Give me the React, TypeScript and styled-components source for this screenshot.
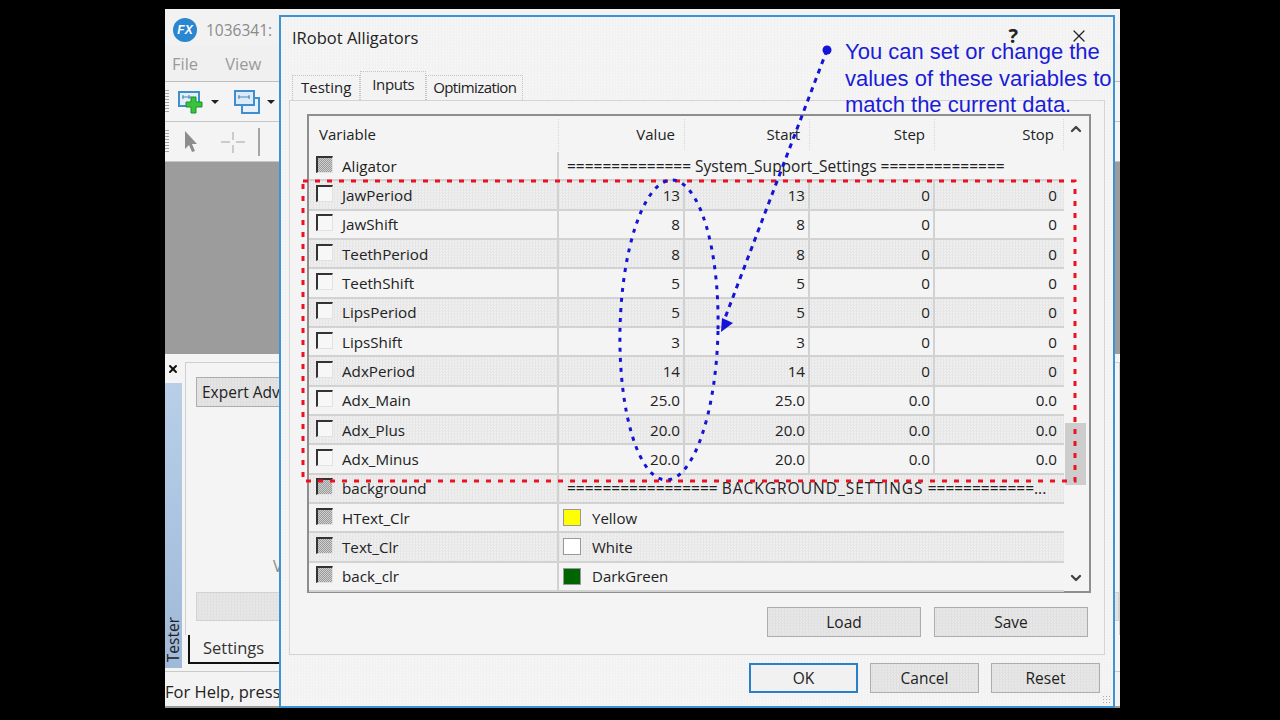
import { createGlobalStyle, styled } from "styled-components"
import { ChevronDown, ChevronUp, X } from "lucide-react"

const Global = createGlobalStyle`
  html, body { margin: 0; padding: 0; background: #000; }
  body { font-family: "Open Sans", "Liberation Sans", sans-serif; color: #222; }
`
const dither = (a: string, b: string, s = 3) => `repeating-conic-gradient(${a} 0 25%, ${b} 0 50%) 0 0 / ${s}px ${s}px`

const Stage = styled.div`
  width: 1280px; height: 720px; background: #000; position: relative; overflow: hidden;
  display: flex; align-items: flex-start; padding: 9px 0 0 165px; box-sizing: border-box;
`
const AppWindow = styled.div`
  width: 955px; height: 699px; background: #f2f2f2; display: flex; flex-direction: column; position: relative;
`
const AppTitle = styled.div`
  height: 36px; display: flex; align-items: center; gap: 9px; padding: 6px 0 0 8px; box-sizing: border-box;
  font-size: 15.5px; color: #8b8b8b;
`
const Logo = styled.div`
  width: 24px; height: 24px; border-radius: 50%; background: #2a86cf; color: #fff;
  display: flex; align-items: center; justify-content: center;
  font: italic bold 12px "Liberation Sans", sans-serif;
`
const MenuBar = styled.div`
  height: 37px; display: flex; align-items: center; gap: 27px; padding-left: 7px;
  font-size: 16.5px; color: #9a9a9a; background: #f0f0f0; border-bottom: 1px solid #bdbdbd; box-sizing: border-box;
`
const Toolbar = styled.div<{ $h: number }>`
  height: ${p => p.$h}px; display: flex; align-items: center; padding-left: 9px; gap: 6px; box-sizing: border-box;
  border-bottom: 1px solid #c6c6c6; background: #f4f4f4;
  &::before { content: ""; width: 4px; height: 24px; margin-left: -9px; margin-right: 3px; background: repeating-linear-gradient(#a5a5a5 0 1px, transparent 1px 3px); }
`
const Caret = styled.span`
  width: 0; height: 0; border-left: 4px solid transparent; border-right: 4px solid transparent;
  border-top: 4px solid #222; margin-right: 9px;
`
const GreyArea = styled.div`
  height: 192px; background: #9c9c9c;
`
const TesterPanel = styled.div`
  flex: 1; display: flex; background: #f4f4f4; min-height: 0;
`
const TesterSide = styled.div`
  width: 20px; display: flex; flex-direction: column; background: #f4f4f4;
`
const PanelClose = styled.div`
  height: 29px; width: 15px; display: flex; align-items: center; justify-content: center; color: #111;
`
const TesterStrip = styled.div`
  flex: 1; width: 17px; background: linear-gradient(#b9cfe8, #9fb9d8); display: flex; align-items: flex-end; justify-content: center;
  padding-bottom: 6px; margin-bottom: 3px;
`
const TesterLabel = styled.span`
  writing-mode: vertical-rl; transform: rotate(180deg); font-size: 15.5px; color: #222; line-height: 17px;
`
const TesterBody = styled.div`
  flex: 1; display: flex; flex-direction: column; padding: 8px 0 7px 0; min-width: 0;
`
const TesterContent = styled.div`
  flex: 1; border: 1px solid #cfcfcf; border-bottom: none; padding: 14px 0 0 10px; display: flex; flex-direction: column;
`
const ComboBox = styled.div`
  height: 30px; width: 83px; background: ${dither("#dedede", "#e6e6e6")}; border: 1px solid #adadad; border-right: none; display: flex; align-items: center;
  padding-left: 5px; font-size: 15.5px; white-space: nowrap; box-sizing: border-box; overflow: hidden;
`
const VisualLabel = styled.div`
  margin: auto 0 0 77px; font-size: 15.5px; color: #888; white-space: nowrap; line-height: 20px;
`
const GreyBar = styled.div`
  height: 29px; background: ${dither("#e0e0e0", "#e8e8e8")}; border: 1px solid #d2d2d2; margin-top: 16px; margin-bottom: 14px; box-sizing: border-box;
`
const SettingsTab = styled.div`
  height: 29px; width: 91px; margin-left: 3px; border-left: 2px solid #111; border-bottom: 2px solid #111; box-sizing: border-box;
  font-size: 16.5px; padding: 1px 0 0 13px; color: #333;
`
const StatusBar = styled.div`
  height: 37px; border-top: 1px solid #c9c9c9; display: flex; align-items: center; box-sizing: border-box;
  padding: 4px 0 0 0; font-size: 16.5px; color: #222; background: #f3f3f3; white-space: nowrap; border-bottom: 2px solid #9a9a9a;
`

const Dialog = styled.div`
  position: absolute; left: 114px; top: 6px; width: 836px; height: 693px; box-sizing: border-box;
  background: ${dither("#f1f1f1", "#f6f6f6")}; border: 2px solid #3f92d2; display: flex; flex-direction: column;
`
const DialogTitle = styled.div`
  height: 55px; padding: 9px 0 0 11px; box-sizing: border-box; font-size: 16.5px; color: #222; flex: none;
  display: flex; justify-content: space-between;
`
const TitleButtons = styled.div`
  display: flex; gap: 51px; padding: 0 24px 0 0; align-items: flex-start; color: #222;
`
const HelpMark = styled.span`
  font: bold 20px/22px "Open Sans", sans-serif; margin-top: -1px;
`
const TabRow = styled.div`
  display: flex; align-items: flex-end; height: 28px; padding-left: 11px; flex: none;
`
const Tab = styled.div<{ $active?: boolean; $pad: number; $track?: number }>`
  height: ${p => (p.$active ? 29 : 25)}px; padding: 0 ${p => p.$pad}px ${p => (p.$active ? 4 : 2)}px; display: flex; align-items: center;
  border: 1px dotted #c4c4c4; border-bottom: none; box-sizing: border-box; font-size: 15px;
  letter-spacing: ${p => p.$track ?? 0}px;
  background: #f3f3f3; color: #222; white-space: nowrap;
`
const TabPanel = styled.div`
  height: 555px; margin: 0 8px; border: 1px solid #d4d4d4; box-sizing: border-box; padding: 13px 13px 0 17px; flex: none;
  background: #f4f4f4;
`
const TableFrame = styled.div`
  height: 479px; width: 784px; border: 2px solid #8e8e8e; box-sizing: border-box; background: #f4f4f4;
  display: flex;
`
const TableBody = styled.div`
  width: 755px; display: flex; flex-direction: column;
`
const Columns = `display: grid; grid-template-columns: 250px 126px 125px 125px 129px;`
const HeaderRow = styled.div`
  ${Columns}; height: 36px; font-size: 15px; flex: none;
`
const HeaderCell = styled.div<{ $left?: boolean }>`
  display: flex; align-items: center; justify-content: ${p => (p.$left ? "flex-start" : "flex-end")};
  padding: ${p => (p.$left ? "0 0 2px 10px" : "0 9px 2px 0")}; border-right: 1px dotted #d8d8d8; margin: 3px 0 2px;
`
const Row = styled.div<{ $shade?: boolean }>`
  ${Columns}; height: 29.33px; flex: none; box-sizing: border-box; border-bottom: 2px solid #d2d2d2;
  background: ${p => (p.$shade ? dither("#e6e6e6", "#f0f0f0") : "#f4f4f4")}; font-size: 15.2px;
`
const NameCell = styled.div`
  display: flex; align-items: center; padding-left: 7px; gap: 9px; border-right: 2px solid #d2d2d2; white-space: nowrap;
`
const CheckBox = styled.span<{ $locked?: boolean }>`
  width: 17px; height: 17px; box-sizing: border-box; flex: none; margin-top: -3px;
  border-left: 2px solid #333; border-top: 2px solid #333;
  border-right: 1px solid #e2e2e2; border-bottom: 1px solid #e2e2e2;
  background: ${p => (p.$locked ? dither("#9a9a9a", "#cfcfcf", 2) : "#f7f7f7")};
`
const NumCell = styled.div`
  display: flex; align-items: center; justify-content: flex-end; padding-right: 3px; border-right: 2px solid #d2d2d2;
`
const LastCell = styled(NumCell)`
  border-right: none; padding-right: 7px;
`
const WideCell = styled.div`
  grid-column: 2 / -1; display: flex; align-items: center; padding-left: 8px; white-space: pre; overflow: hidden; gap: 11px; font-size: 15.5px;
`
const Caps = styled.span`
  letter-spacing: 1px;
`
const Swatch = styled.span<{ $color: string }>`
  width: 18px; height: 17px; flex: none; box-sizing: border-box; border: 1px solid #999; margin-left: -4px; background: ${p => p.$color};
`
const ColorName = styled.span`
  font-size: 15px;
`
const ScrollBar = styled.div`
  flex: 1; display: flex; flex-direction: column; align-items: center; padding: 5px 2px 0 0; color: #444;
`
const ScrollThumb = styled.div`
  width: 21px; height: 62px; background: #cdcdcd; margin-top: 286px;
`
const ScrollEnd = styled.div`
  margin-top: auto; padding-bottom: 5px; display: flex;
`
const TableActions = styled.div`
  display: flex; justify-content: flex-end; gap: 13px; padding: 14px 3px 0 0;
`
const Button = styled.button<{ $w: number; $primary?: boolean }>`
  width: ${p => p.$w}px; height: 30px; font: 15.5px "Open Sans", "Liberation Sans", sans-serif; color: #222; padding: 0;
  background: ${p => (p.$primary ? "#f1f1f1" : dither("#e0e0e0", "#e8e8e8"))};
  border: ${p => (p.$primary ? "2px solid #2a7fc9" : "1px solid #adadad")};
`
const DialogActions = styled.div`
  display: flex; justify-content: flex-end; gap: 12px; padding: 8px 13px 0 0;
`
const Grip = styled.div`
  position: absolute; right: 2px; bottom: 2px; width: 9px; height: 9px;
  background-image: radial-gradient(#aaa 1px, transparent 1px); background-size: 3px 3px;
`
const Note = styled.div`
  position: absolute; left: 845px; top: 39px; font: 22px/26.6px "Liberation Sans", sans-serif; color: #1c1cd6; white-space: nowrap;
`
const Overlay = styled.svg`
  position: absolute; left: 0; top: 0; pointer-events: none;
`

type Item = { name: string; value: string; step: string }
const items: Item[] = [
  { name: "JawPeriod", value: "13", step: "0" },
  { name: "JawShift", value: "8", step: "0" },
  { name: "TeethPeriod", value: "8", step: "0" },
  { name: "TeethShift", value: "5", step: "0" },
  { name: "LipsPeriod", value: "5", step: "0" },
  { name: "LipsShift", value: "3", step: "0" },
  { name: "AdxPeriod", value: "14", step: "0" },
  { name: "Adx_Main", value: "25.0", step: "0.0" },
  { name: "Adx_Plus", value: "20.0", step: "0.0" },
  { name: "Adx_Minus", value: "20.0", step: "0.0" },
]
const colors = [
  { name: "HText_Clr", color: "#ffff00", label: "Yellow", shade: false },
  { name: "Text_Clr", color: "#ffffff", label: "White", shade: true },
  { name: "back_clr", color: "#006400", label: "DarkGreen", shade: false },
]

function AddIcon() {
  return (
    <svg width="27" height="24" viewBox="0 0 27 24">
      <rect x="1" y="2" width="20" height="14" fill="#e4eff8" stroke="#3f8fce" strokeWidth="2" />
      <path d="M4 7h9M5 5v4M11 5v4" stroke="#4a86b5" strokeWidth="1" />
      <path d="M13 7h5v5h6v5h-6v6h-5v-6H8v-5h5z" fill="#35c43c" stroke="#1f8f2a" />
    </svg>
  )
}
function CopyIcon() {
  return (
    <svg width="27" height="26" viewBox="0 0 27 26">
      <rect x="8" y="9" width="17" height="15" fill="#e8f1f9" stroke="#3f8fce" strokeWidth="2" />
      <rect x="1" y="2" width="19" height="14" fill="#dcebf7" stroke="#3f8fce" strokeWidth="2" />
      <path d="M4 8h12M5 6v4M15 6v4" stroke="#4a86b5" strokeWidth="1" />
    </svg>
  )
}
function ToolIcons() {
  return (
    <svg width="90" height="30" viewBox="0 0 90 30">
      <path d="M7 4v18l4-4 3 7 3-1-3-7h5z" fill="#8d8d8d" />
      <path d="M55 5v8M55 18v8M43 15h9M58 15h9" stroke="#bdbdbd" strokeWidth="1.5" />
      <path d="M81 1v28" stroke="#a5a5a5" strokeWidth="2" />
    </svg>
  )
}

export default function App() {
  return (
    <Stage>
      <Global />
      <AppWindow>
        <AppTitle><Logo>FX</Logo>1036341:</AppTitle>
        <MenuBar><span>File</span><span>View</span></MenuBar>
        <Toolbar $h={40}><AddIcon /><Caret /><CopyIcon /><Caret /></Toolbar>
        <Toolbar $h={40}><ToolIcons /></Toolbar>
        <GreyArea />
        <TesterPanel>
          <TesterSide>
            <PanelClose><X size={12} strokeWidth={4} /></PanelClose>
            <TesterStrip><TesterLabel>Tester</TesterLabel></TesterStrip>
          </TesterSide>
          <TesterBody>
            <TesterContent>
              <ComboBox>Expert Adv</ComboBox>
              <VisualLabel>V</VisualLabel>
              <GreyBar />
            </TesterContent>
            <SettingsTab>Settings</SettingsTab>
          </TesterBody>
        </TesterPanel>
        <StatusBar>For Help, press</StatusBar>

        <Dialog>
          <DialogTitle>
            IRobot Alligators
            <TitleButtons>
              <HelpMark>?</HelpMark>
              <X size={20} strokeWidth={1.5} />
            </TitleButtons>
          </DialogTitle>
          <TabRow>
            <Tab $pad={8}>Testing</Tab>
            <Tab $active $pad={11} $track={-0.4}>Inputs</Tab>
            <Tab $pad={6} $track={-0.6}>Optimization</Tab>
          </TabRow>
          <TabPanel>
            <TableFrame>
              <TableBody>
                <HeaderRow>
                  <HeaderCell $left>Variable</HeaderCell>
                  <HeaderCell>Value</HeaderCell>
                  <HeaderCell>Start</HeaderCell>
                  <HeaderCell>Step</HeaderCell>
                  <HeaderCell>Stop</HeaderCell>
                </HeaderRow>
                <Row>
                  <NameCell><CheckBox $locked />Aligator</NameCell>
                  <WideCell>============== System_Support_Settings ==============</WideCell>
                </Row>
                {items.map((it, i) => (
                  <Row key={it.name} $shade={i % 2 === 0}>
                    <NameCell><CheckBox />{it.name}</NameCell>
                    <NumCell>{it.value}</NumCell>
                    <NumCell>{it.value}</NumCell>
                    <NumCell>{it.step}</NumCell>
                    <LastCell>{it.step}</LastCell>
                  </Row>
                ))}
                <Row $shade>
                  <NameCell><CheckBox $locked />background</NameCell>
                  <WideCell><span>================= <Caps>BACKGROUND_SETTINGS</Caps> ============...</span></WideCell>
                </Row>
                {colors.map(c => (
                  <Row key={c.name} $shade={c.shade}>
                    <NameCell><CheckBox $locked />{c.name}</NameCell>
                    <WideCell><Swatch $color={c.color} /><ColorName>{c.label}</ColorName></WideCell>
                  </Row>
                ))}
              </TableBody>
              <ScrollBar>
                <ChevronUp size={16} strokeWidth={3.5} />
                <ScrollThumb />
                <ScrollEnd><ChevronDown size={16} strokeWidth={3.5} /></ScrollEnd>
              </ScrollBar>
            </TableFrame>
            <TableActions>
              <Button $w={154}>Load</Button>
              <Button $w={154}>Save</Button>
            </TableActions>
          </TabPanel>
          <DialogActions>
            <Button $w={109} $primary>OK</Button>
            <Button $w={109}>Cancel</Button>
            <Button $w={109}>Reset</Button>
          </DialogActions>
          <Grip />
        </Dialog>
      </AppWindow>

      <Note>You can set or change the<br />values of these variables to<br />match the current data.</Note>
      <Overlay width="1280" height="720" viewBox="0 0 1280 720">
        <rect x="303" y="181" width="772" height="300" fill="none" stroke="#ee1122" strokeWidth="3" strokeDasharray="5 7" />
        <ellipse cx="669" cy="330" rx="49" ry="150" transform="rotate(1.2 669 330)" fill="none" stroke="#1414d8" strokeWidth="3" strokeDasharray="4 6" />
        <path d="M827 50L725 318" fill="none" stroke="#1414d8" strokeWidth="3" strokeDasharray="5 5" />
        <circle cx="827" cy="50" r="4.5" fill="#1414d8" />
        <path d="M721 332l1-14 11 5z" fill="#1414d8" />
      </Overlay>
    </Stage>
  )
}
